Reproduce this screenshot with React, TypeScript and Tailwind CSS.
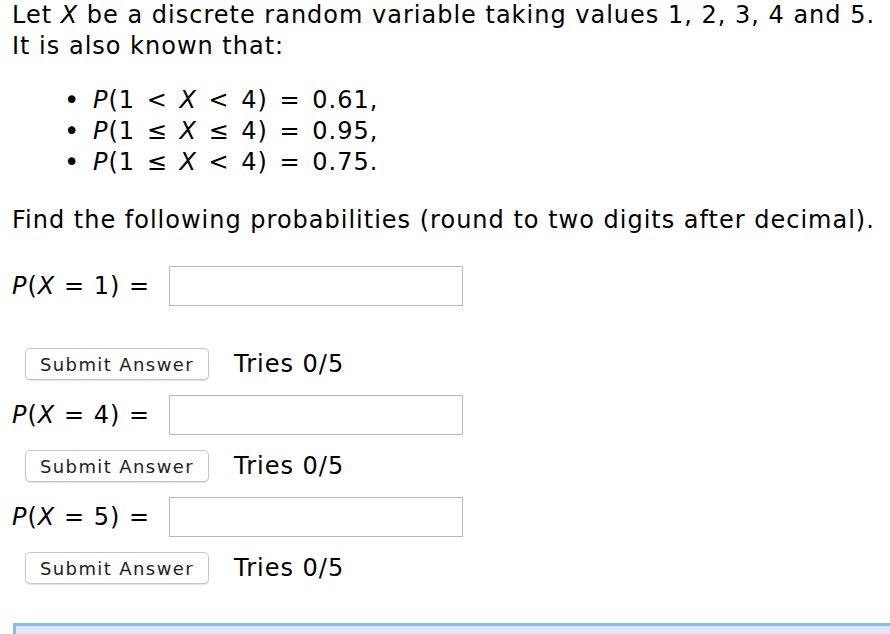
import React from 'react';

const font = { fontFamily: '"DejaVu Sans", Verdana, sans-serif' };

const Eq: React.FC<{ left: React.ReactNode }> = ({ left }) => (
  <div className="flex items-center h-[40px]">
    <span className="w-[157px] whitespace-nowrap">{left}</span>
    <input type="text" className="w-[294px] h-[40px] border border-[#b9b9b9] bg-white outline-none" />
  </div>
);

const Submit: React.FC = () => (
  <div className="flex items-center ml-[13px] h-[32px]">
    <button className="w-[184px] h-[32px] rounded-[5px] border border-[#c6c6c6] bg-white text-[18px] tracking-[1.4px] text-[#222] shadow-[0_1px_1px_rgba(0,0,0,0.12)]">
      Submit Answer
    </button>
    <span className="ml-[25px]">Tries 0/5</span>
  </div>
);

export default function App() {
  return (
    <div
      className="w-[890px] h-[634px] bg-white text-black text-[24px] leading-[31px] tracking-[1px] overflow-hidden"
      style={font}
    >
      <div className="px-[12px]">
        <p>
          Let <i>X</i> be a discrete random variable taking values 1, 2, 3, 4 and 5.
        </p>
        <p>It is also known that:</p>

        <ul className="mt-[23px] ml-[52px]">
          {[
            <>
              <i>P</i>(1 &lt; <i>X</i> &lt; 4) = 0.61,
            </>,
            <>
              <i>P</i>(1 ≤ <i>X</i> ≤ 4) = 0.95,
            </>,
            <>
              <i>P</i>(1 ≤ <i>X</i> &lt; 4) = 0.75.
            </>,
          ].map((c, i) => (
            <li key={i} className="flex items-center">
              <span className="w-[29px] text-[26px]">•</span>
              <span className="[word-spacing:3px]">{c}</span>
            </li>
          ))}
        </ul>

        <p className="mt-[27px] whitespace-nowrap">
          Find the following probabilities (round to two digits after decimal).
        </p>

        <div className="mt-[30px]">
          <Eq left={<><i>P</i>(<i>X</i> = 1) =</>} />
        </div>
        <div className="mt-[42px]">
          <Submit />
        </div>
        <div className="mt-[15px]">
          <Eq left={<><i>P</i>(<i>X</i> = 4) =</>} />
        </div>
        <div className="mt-[15px]">
          <Submit />
        </div>
        <div className="mt-[15px]">
          <Eq left={<><i>P</i>(<i>X</i> = 5) =</>} />
        </div>
        <div className="mt-[15px]">
          <Submit />
        </div>
      </div>
      <div className="mt-[39px] ml-[13px] h-[40px] border-t-[3px] border-l-[3px] border-[#8ab9f1] bg-[#e4e6fb]" />
    </div>
  );
}
